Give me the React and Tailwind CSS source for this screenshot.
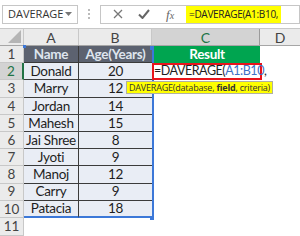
import React from "react";

const rows = [
  ["Donald", "20"],
  ["Marry", "12"],
  ["Jordan", "14"],
  ["Mahesh", "15"],
  ["Jai Shree", "8"],
  ["Jyoti", "9"],
  ["Manoj", "12"],
  ["Carry", "9"],
  ["Patacia", "18"],
];

function RowHead({ n, active }) {
  return (
    <div
      className={
        "w-[24px] shrink-0 h-full flex items-center justify-center border-r border-b border-[#c8c8c8] text-[13.5px] " +
        (active ? "bg-[#d3d3d3] text-[#217346] border-r-2 border-r-[#217346]" : "bg-[#ebebeb] text-[#444]")
      }
    >
      {n}
    </div>
  );
}

const cellText = "text-[13.5px] tracking-[-0.3px] whitespace-nowrap";

export default function App() {
  return (
    <div className="w-[300px] h-[236px] overflow-hidden bg-white relative font-['Lato',sans-serif]">
      {/* formula toolbar */}
      <div className="h-[29px] flex items-center bg-white border-b border-[#c8c8c8]">
        <div className="ml-[2px] w-[76px] h-[19px] border border-[#c6c6c6] flex items-center justify-between pl-[5px] pr-[5px] text-[11px] text-[#333] font-['Open_Sans',sans-serif]">
          <span>DAVERAGE</span>
          <svg width="7" height="4" viewBox="0 0 7 4"><path d="M0 0h7L3.5 4z" fill="#777" /></svg>
        </div>
        <div className="w-[22px] flex flex-col items-center gap-[2px]">
          <span className="w-[2px] h-[2px] bg-[#bbb]" />
          <span className="w-[2px] h-[2px] bg-[#bbb]" />
          <span className="w-[2px] h-[2px] bg-[#bbb]" />
        </div>
        <div className="flex-1 h-[19px] border border-[#c6c6c6] flex items-center">
          <div className="w-[85px] h-full flex items-center justify-around px-[4px] text-[#666]">
            <svg width="10" height="10" viewBox="0 0 10 10"><path d="M1 1l8 8M9 1l-8 8" stroke="#777" strokeWidth="1.3" /></svg>
            <svg width="12" height="10" viewBox="0 0 12 10"><path d="M1 5.5l3.5 3.5L11 1" stroke="#666" strokeWidth="2" fill="none" /></svg>
            <span className="font-['Liberation_Serif',serif] italic text-[13px] text-[#666] leading-none">f<span className="text-[10px]">x</span></span>
          </div>
          <div className="h-full bg-[#ffff00] flex items-center px-[3px] text-[10px] tracking-[-0.3px] text-[#222] font-['Open_Sans',sans-serif] whitespace-nowrap">
            =DAVERAGE(A1:B10,
          </div>
        </div>
      </div>

      {/* column headers */}
      <div className="h-[17px] flex bg-[#ebebeb] border-b border-[#a6a6a6] text-[14px] text-[#444]">
        <div className="w-[24px] shrink-0 border-r border-[#c8c8c8] flex items-end justify-end p-[2px]">
          <svg width="13" height="13" viewBox="0 0 13 13"><path d="M13 0V13H0z" fill="#b5b5b5" /></svg>
        </div>
        <div className="w-[55px] shrink-0 border-r border-[#c8c8c8] flex items-center justify-center">A</div>
        <div className="w-[73px] shrink-0 border-r border-[#c8c8c8] flex items-center justify-center">B</div>
        <div className="w-[108px] shrink-0 border-r border-[#9b9b9b] bg-[#d3d3d3] text-[#217346] flex items-center justify-center">C</div>
        <div className="flex-1 flex items-center justify-center">D</div>
      </div>

      {/* row 1 */}
      <div className="h-[17.2px] flex">
        <RowHead n={1} />
        <div className={"w-[55px] shrink-0 bg-[#5c6270] text-[#dfe5ee] font-bold flex items-center justify-center border-r border-b border-[#3b3b3b] " + cellText}>Name</div>
        <div className={"w-[73px] shrink-0 bg-[#5c6270] text-[#dfe5ee] font-bold flex items-center justify-center border-b border-[#3b3b3b] " + cellText}>Age(Years)</div>
        <div className={"w-[108px] shrink-0 bg-[#00a550] text-white font-bold flex items-center justify-center border-l-2 border-[#3c78d8] " + cellText}>Result</div>
        <div className="flex-1" />
      </div>

      {rows.map(([name, age], i) => (
        <div key={i} className="h-[17.2px] flex">
          <RowHead n={i + 2} active={i === 0} />
          <div className={"w-[55px] shrink-0 bg-[#e9edf5] text-[#1e1e1e] flex items-center justify-center border-r border-[#3b3b3b] " + cellText + " " + (i === rows.length - 1 ? "border-b-2 border-b-[#3c78d8]" : "border-b")}>{name}</div>
          <div className={"w-[73px] shrink-0 bg-[#e9edf5] text-[#1e1e1e] flex items-center justify-center " + cellText + " " + (i === rows.length - 1 ? "border-b-2 border-b-[#3c78d8]" : "border-b border-[#3b3b3b]")}>{age}</div>
          <div className="w-[108px] shrink-0 border-l-2 border-[#3c78d8] relative">
            {i === 0 && (
              <div className="absolute left-[-2px] top-0 w-[110px] h-[17px] border-2 border-[#e8141b] flex items-center pl-0 text-[#1e1e1e] bg-white text-[12.5px] tracking-[-0.45px] whitespace-nowrap">
                =DAVERAGE(<span className="text-[#3f72c5]">A1:B10</span>,
              </div>
            )}
          </div>
          <div className="flex-1" />
        </div>
      ))}

      <div className="h-[18px] flex">
        <RowHead n={11} />
        <div className="flex-1" />
      </div>

      {/* range handles */}
      <div className="absolute left-[23px] top-[45px] w-[3px] h-[3px] bg-[#3c78d8]" />
      <div className="absolute left-[150px] top-[46px] w-[4px] h-[4px] bg-[#3c78d8]" />
      <div className="absolute left-[150px] top-[216px] w-[4px] h-[4px] bg-[#3c78d8]" />

      {/* tooltip */}
      <div className="absolute left-[126px] top-[81px] h-[13px] px-[2px] bg-[#ffff00] border border-[#b0b0a0] flex items-center text-[9px] tracking-[-0.2px] text-[#333] whitespace-nowrap font-['Open_Sans',sans-serif] leading-none">
        DAVERAGE(database,&nbsp;<b>field</b>, criteria)
      </div>
    </div>
  );
}
